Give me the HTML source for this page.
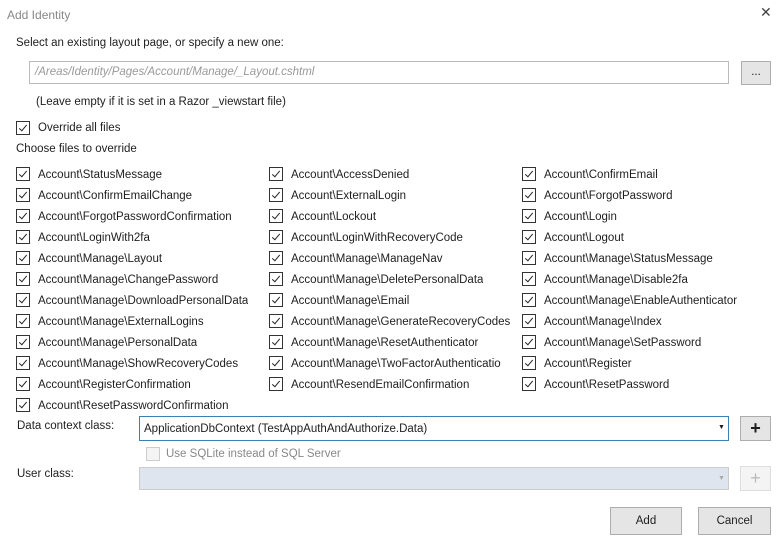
<!DOCTYPE html>
<html><head><style>
body{margin:0;width:782px;height:540px;background:#fff;font-family:"Liberation Sans",sans-serif;font-size:11.5px;color:#1e1e1e;position:relative;overflow:hidden}
.a{position:absolute;white-space:nowrap}
.cb{position:absolute;width:12px;height:12px;border:1px solid #333;background:#fff}
.cb:after{content:"";position:absolute;left:4px;top:1px;width:3px;height:7px;border:solid #222;border-width:0 1.6px 1.6px 0;transform:rotate(40deg)}
.btn{position:absolute;background:#e5e5e5;border:1px solid #adadad;text-align:center;box-sizing:border-box}
</style></head><body>
<div class="a" style="left:7px;top:8px;color:#888;font-size:12px">Add Identity</div>
<div class="a" style="left:760px;top:4px;font-size:14px;color:#444">✕</div>
<div class="a" style="left:16px;top:37px">Select an existing layout page, or specify a new one:</div>
<div class="a" style="left:29px;top:61px;width:700px;height:23px;border:1px solid #bbb;box-sizing:border-box;"></div>
<div class="a" style="left:35px;top:66px;color:#999;font-style:italic">/Areas/Identity/Pages/Account/Manage/_Layout.cshtml</div>
<div class="btn" style="left:741px;top:61px;width:30px;height:24px;line-height:20px">...</div>
<div class="a" style="left:36px;top:96px">(Leave empty if it is set in a Razor _viewstart file)</div>
<div class="cb" style="left:16px;top:121px"></div><div class="a" style="left:38px;top:122px">Override all files</div>
<div class="a" style="left:16px;top:143px">Choose files to override</div>
<div id="g"></div>
<div class="a" style="left:17px;top:420px">Data context class:</div>
<div class="a" style="left:139px;top:416px;width:590px;height:25px;border:1px solid #3c7fb1;box-sizing:border-box"></div>
<div class="a" style="left:144px;top:423px">ApplicationDbContext (TestAppAuthAndAuthorize.Data)</div>
<div class="a" style="left:718px;top:424px;font-size:7px">▼</div>
<div class="btn" style="left:740px;top:416px;width:31px;height:25px;line-height:22px;font-size:18px;font-weight:bold">+</div>
<div class="a" style="left:146px;top:447px;width:12px;height:12px;border:1px solid #ccc;background:#f4f4f4"></div>
<div class="a" style="left:166px;top:448px;color:#888">Use SQLite instead of SQL Server</div>
<div class="a" style="left:17px;top:468px">User class:</div>
<div class="a" style="left:139px;top:467px;width:590px;height:23px;background:#dfe5ef;border:1px solid #ccc;box-sizing:border-box"></div>
<div class="a" style="left:718px;top:475px;font-size:7px;color:#aaa">▼</div>
<div class="btn" style="left:740px;top:466px;width:31px;height:25px;line-height:22px;font-size:18px;color:#bbb;background:#f4f4f4;border-color:#ddd">+</div>
<div class="btn" style="left:610px;top:507px;width:72px;height:28px;line-height:26px">Add</div>
<div class="btn" style="left:698px;top:507px;width:73px;height:28px;line-height:26px">Cancel</div>
<script>
var c=[["StatusMessage","AccessDenied","ConfirmEmail"],["ConfirmEmailChange","ExternalLogin","ForgotPassword"],["ForgotPasswordConfirmation","Lockout","Login"],["LoginWith2fa","LoginWithRecoveryCode","Logout"],["Manage\\Layout","Manage\\ManageNav","Manage\\StatusMessage"],["Manage\\ChangePassword","Manage\\DeletePersonalData","Manage\\Disable2fa"],["Manage\\DownloadPersonalData","Manage\\Email","Manage\\EnableAuthenticator"],["Manage\\ExternalLogins","Manage\\GenerateRecoveryCodes","Manage\\Index"],["Manage\\PersonalData","Manage\\ResetAuthenticator","Manage\\SetPassword"],["Manage\\ShowRecoveryCodes","Manage\\TwoFactorAuthenticatio","Register"],["RegisterConfirmation","ResendEmailConfirmation","ResetPassword"],["ResetPasswordConfirmation"]];
var xs=[16,269,522],h="";
c.forEach(function(r,i){r.forEach(function(t,j){var y=167+i*21;h+='<div class="cb" style="left:'+xs[j]+'px;top:'+y+'px"></div><div class="a" style="left:'+(xs[j]+22)+'px;top:'+(y+2)+'px;max-width:228px;overflow:hidden">Account\\'+t+'</div>';});});
document.getElementById("g").innerHTML=h;
</script>
</body></html>
